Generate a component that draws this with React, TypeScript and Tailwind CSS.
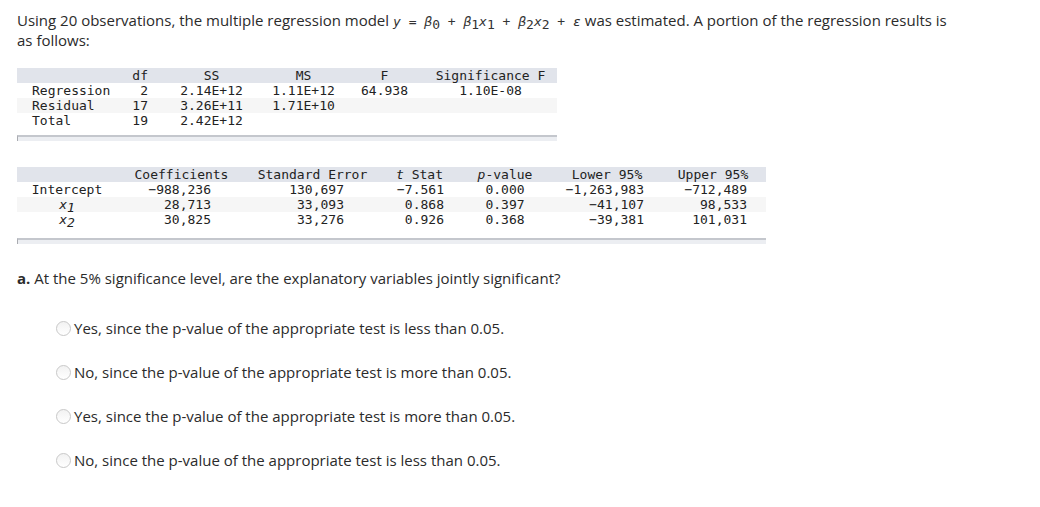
import React from 'react';

const mono = "font-['DejaVu_Sans_Mono',monospace]";

const Sub: React.FC<{ children: React.ReactNode }> = ({ children }) => (
    <span className="align-[-3px]">{children}</span>
);

const Bar: React.FC<{ width: string }> = ({ width }) => (
    <div className={`${width} h-[6px] border-t-2 border-t-[#c4c7cd] border-l border-l-[#a9abb0] bg-[#eceef2]`} />
);

const Radio: React.FC<{ label: string }> = ({ label }) => (
    <label className="flex items-center gap-[3px] h-[19px]">
        <span className="w-[15px] h-[15px] rounded-full border border-[#c8c8c8] bg-gradient-to-b from-[#f2f2f2] to-white shrink-0" />
        <span>{label}</span>
    </label>
);

export default function App() {
    const anova = [
        { label: 'Regression', df: '2', ss: '2.14E+12', ms: '1.11E+12', f: '64.938', sig: '1.10E-08', band: false },
        { label: 'Residual', df: '17', ss: '3.26E+11', ms: '1.71E+10', f: '', sig: '', band: true },
        { label: 'Total', df: '19', ss: '2.42E+12', ms: '', f: '', sig: '', band: false },
    ];

    const coefs = [
        { label: <span>Intercept</span>, c: '\u2212988,236', se: '130,697', t: '\u22127.561', p: '0.000', lo: '\u22121,263,983', up: '\u2212712,489', band: false },
        { label: <span className="italic">x<Sub>1</Sub></span>, c: '28,713', se: '33,093', t: '0.868', p: '0.397', lo: '\u221241,107', up: '98,533', band: true },
        { label: <span className="italic">x<Sub>2</Sub></span>, c: '30,825', se: '33,276', t: '0.926', p: '0.368', lo: '\u221239,381', up: '101,031', band: false },
    ];

    const options = [
        'Yes, since the p-value of the appropriate test is less than 0.05.',
        'No, since the p-value of the appropriate test is more than 0.05.',
        'Yes, since the p-value of the appropriate test is more than 0.05.',
        'No, since the p-value of the appropriate test is less than 0.05.',
    ];

    return (
        <div className="w-[1040px] h-[507px] bg-white text-[#2b2b2b] font-['Open_Sans',sans-serif] text-[15px] leading-[19px] pl-[17px] pt-[11px] overflow-hidden">
            {/* Problem statement */}
            <p className="w-[940px]">
                Using 20 observations, the multiple regression model{' '}
                <span className={`${mono} text-[13px] leading-none text-[#333]`}>
                    <i>y</i> = <i>β</i><Sub>0</Sub> + <i>β</i><Sub>1</Sub><i>x</i><Sub>1</Sub> + <i>β</i><Sub>2</Sub><i>x</i><Sub>2</Sub> + <i>ε</i>
                </span>{' '}
                was estimated. A portion of the regression results is as follows:
            </p>

            {/* ANOVA table */}
            <div className={`${mono} text-[13px] leading-[15px] text-[#222] mt-[18px] w-[540px]`}>
                <div className="flex h-[15px] bg-[#e1e4eb]">
                    <div className="w-[109px] shrink-0" />
                    <div className="w-[24px] shrink-0 text-right pr-[2px]">df</div>
                    <div className="w-[123px] shrink-0 flex justify-center">SS</div>
                    <div className="w-[61px] shrink-0 flex justify-center">MS</div>
                    <div className="w-[101px] shrink-0 flex justify-center">F</div>
                    <div className="w-[111px] shrink-0 flex justify-center whitespace-nowrap">Significance F</div>
                </div>
                {anova.map((r) => (
                    <div key={r.label} className={`flex h-[15px] ${r.band ? 'bg-[#f6f6f6]' : ''}`}>
                        <div className="w-[109px] shrink-0 pl-[15px]">{r.label}</div>
                        <div className="w-[24px] shrink-0 text-right pr-[2px]">{r.df}</div>
                        <div className="w-[123px] shrink-0 flex justify-center">{r.ss}</div>
                        <div className="w-[61px] shrink-0 flex justify-center whitespace-nowrap">{r.ms}</div>
                        <div className="w-[101px] shrink-0 flex justify-center">{r.f}</div>
                        <div className="w-[111px] shrink-0 flex justify-center">{r.sig}</div>
                    </div>
                ))}
            </div>
            <div className="mt-[7px]">
                <Bar width="w-[540px]" />
            </div>

            {/* Coefficients table */}
            <div className={`${mono} text-[13px] leading-[15px] text-[#222] mt-[26px] w-[749px]`}>
                <div className="flex h-[15px] bg-[#e1e4eb] whitespace-nowrap">
                    <div className="w-[100px] shrink-0" />
                    <div className="w-[129px] shrink-0 flex justify-center">Coefficients</div>
                    <div className="w-[133px] shrink-0 flex justify-center">Standard Error</div>
                    <div className="w-[81px] shrink-0 flex justify-center"><span><i>t</i> Stat</span></div>
                    <div className="w-[90px] shrink-0 flex justify-center"><span><i>p</i>-value</span></div>
                    <div className="w-[114px] shrink-0 flex justify-center">Lower 95%</div>
                    <div className="w-[98px] shrink-0 flex justify-center">Upper 95%</div>
                </div>
                {coefs.map((r, i) => (
                    <div key={i} className={`flex h-[15px] whitespace-nowrap ${r.band ? 'bg-[#f6f6f6]' : ''}`}>
                        <div className="w-[100px] shrink-0 flex justify-center">{r.label}</div>
                        <div className="w-[129px] shrink-0 text-right pr-[35px]">{r.c}</div>
                        <div className="w-[133px] shrink-0 text-right pr-[35px]">{r.se}</div>
                        <div className="w-[81px] shrink-0 text-right pr-[16px]">{r.t}</div>
                        <div className="w-[90px] shrink-0 flex justify-center">{r.p}</div>
                        <div className="w-[114px] shrink-0 text-right pr-[20px]">{r.lo}</div>
                        <div className="w-[98px] shrink-0 text-right pr-[15px]">{r.up}</div>
                    </div>
                ))}
            </div>
            <div className="mt-[11px]">
                <Bar width="w-[749px]" />
            </div>

            {/* Question */}
            <p className="mt-[25px]">
                <b>a.</b> At the 5% significance level, are the explanatory variables jointly significant?
            </p>

            <div className="mt-[31px] pl-[39px] flex flex-col gap-[25px]">
                {options.map((o) => (
                    <Radio key={o} label={o} />
                ))}
            </div>
        </div>
    );
}
